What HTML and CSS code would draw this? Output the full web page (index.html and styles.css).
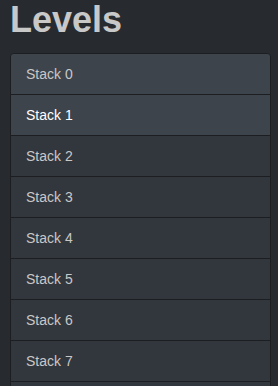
FILE: index.html
```html
<!DOCTYPE html>
<html>
<head>
<meta charset="utf-8">
<link rel="stylesheet" href="styles.css">
</head>
<body>
<div class="page">
  <h1 class="title">Levels</h1>
  <div class="list">
    <div class="item light">Stack 0</div>
    <div class="item light active">Stack 1</div>
    <div class="item">Stack 2</div>
    <div class="item">Stack 3</div>
    <div class="item">Stack 4</div>
    <div class="item">Stack 5</div>
    <div class="item">Stack 6</div>
    <div class="item">Stack 7</div>
    <div class="item">Stack 8</div>
    <div class="item">Stack 9</div>
  </div>
</div>
</body>
</html>
```

FILE: styles.css
```css
html, body {
  margin: 0;
  padding: 0;
  background: #272b30;
  font-family: "Liberation Sans", Arial, sans-serif;
  color: #c8c8c8;
}
.page {
  padding: 0 7px 0 10px;
}
.title {
  margin: 0 0 13px 0;
  font-size: 36px;
  line-height: 40px;
  font-weight: bold;
  color: #c8c8c8;
}
.list {
  display: flex;
  flex-direction: column;
  border: 1px solid #1c1e22;
  border-radius: 4px;
  overflow: hidden;
}
.item {
  padding: 10px 15px;
  font-size: 14px;
  line-height: 20px;
  background: #32363d;
  border-bottom: 1px solid #1c1e22;
  color: #c8c8c8;
}
.item:last-child {
  border-bottom: none;
}
.item.light {
  background: #3e444c;
}
.item.active {
  color: #ffffff;
}
```
